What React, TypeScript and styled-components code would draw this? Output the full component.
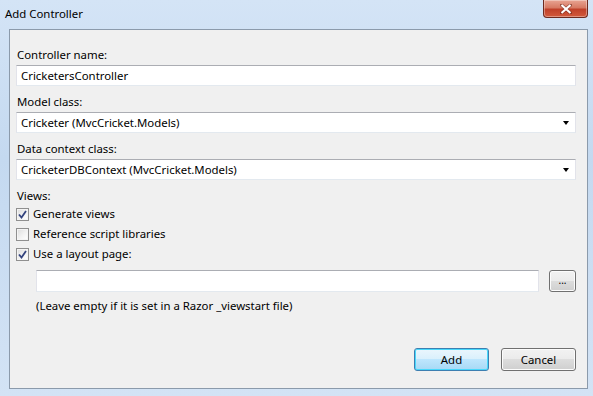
import React from "react";
import styled, { createGlobalStyle } from "styled-components";

const GlobalStyle = createGlobalStyle`
  html, body {
    margin: 0;
    padding: 0;
    width: 593px;
    height: 396px;
    overflow: hidden;
  }
  * {
    box-sizing: border-box;
  }
`;

const Window = styled.div`
  width: 593px;
  height: 396px;
  display: flex;
  flex-direction: column;
  font-family: "Noto Sans", "Open Sans", sans-serif;
  font-size: 11.4px;
  color: #000;
  background: linear-gradient(180deg, #d4e4f6 0%, #c4d9f0 40%, #d3e3f5 100%);
`;

const TitleBar = styled.div`
  height: 29px;
  display: flex;
  align-items: flex-start;
  justify-content: space-between;
  padding: 0 5px;
`;

const Title = styled.div`
  padding-top: 6px;
  line-height: 16px;
  color: #000;
`;

const CloseButton = styled.div`
  width: 45px;
  height: 18px;
  border: 1px solid #6d2a1f;
  border-top: none;
  border-radius: 0 0 4px 4px;
  background: linear-gradient(180deg, #e8a493 0%, #d77a64 45%, #c0412a 55%, #d25a3c 100%);
  box-shadow: inset 0 0 0 1px rgba(255, 255, 255, 0.35);
  display: flex;
  align-items: center;
  justify-content: center;
`;

const Client = styled.div`
  flex: 1;
  margin: 0 5px 7px 9px;
  border: 1px solid #8b9aab;
  background: #f0f0f0;
  display: flex;
  flex-direction: column;
  padding: 17px 11px 17px 6px;
`;

const FieldLabel = styled.div`
  line-height: 16px;
  margin-bottom: 2px;
  padding-left: 1px;
`;

const SectionLabel = styled(FieldLabel)`
  margin-bottom: 0;
`;

const Field = styled.div`
  margin-bottom: 8px;
`;

const TextBox = styled.input`
  display: block;
  width: 100%;
  height: 21px;
  padding: 0 4px;
  margin: 0;
  font-family: "Noto Sans", "Open Sans", sans-serif;
  font-size: 11.4px;
  color: #000;
  background: #fff;
  border: 1px solid #e2e3ea;
  border-top-color: #abadb3;
  border-bottom-color: #e3e9ef;
  border-radius: 0;
  outline: none;
`;

const Combo = styled.div`
  height: 21px;
  display: flex;
  align-items: center;
  justify-content: space-between;
  padding: 0 6px 0 4px;
  background: #fff;
  border: 1px solid #e2e3ea;
  border-top-color: #abadb3;
  border-bottom-color: #e3e9ef;
`;

const Arrow = styled.span`
  width: 0;
  height: 0;
  border-left: 3.5px solid transparent;
  border-right: 3.5px solid transparent;
  border-top: 4px solid #000;
`;

const CheckRow = styled.label`
  height: 20px;
  display: flex;
  align-items: center;
  gap: 4px;
  line-height: 16px;
`;

const CheckBox = styled.span`
  width: 13px;
  height: 13px;
  flex: none;
  border: 1px solid #8f8f8f;
  background: linear-gradient(135deg, #dcdcdc 0%, #f4f4f4 60%, #ffffff 100%);
  box-shadow: inset 0 0 0 1px #f4f4f4;
  display: flex;
  align-items: center;
  justify-content: center;
`;

const LayoutRow = styled.div`
  display: flex;
  align-items: center;
  gap: 10px;
  margin: 6px 0 0 20px;
`;

const LayoutBox = styled(TextBox)`
  flex: 1;
  height: 22px;
`;

const SmallButton = styled.div`
  width: 27px;
  height: 22px;
  border: 1px solid #707070;
  border-radius: 3px;
  background: linear-gradient(180deg, #f2f2f2 0%, #ebebeb 50%, #dddddd 50%, #cfcfcf 100%);
  box-shadow: inset 0 0 0 1px #fcfcfc;
  display: flex;
  align-items: center;
  justify-content: center;
  font-size: 10px;
  line-height: 1;
  padding-bottom: 3px;
`;

const Hint = styled.div`
  line-height: 16px;
  margin: 6px 0 0 20px;
`;

const ButtonRow = styled.div`
  margin-top: auto;
  display: flex;
  justify-content: flex-end;
  gap: 12px;
`;

const DialogButton = styled.div<{ $primary?: boolean }>`
  width: 75px;
  height: 23px;
  border-radius: 3px;
  display: flex;
  align-items: center;
  justify-content: center;
  border: 1px solid ${({ $primary }) => ($primary ? "#3c7fb1" : "#707070")};
  background: ${({ $primary }) =>
    $primary
      ? "linear-gradient(180deg, #eaf6fd 0%, #d9f0fc 50%, #bee6fd 50%, #a7d9f5 100%)"
      : "linear-gradient(180deg, #f2f2f2 0%, #ebebeb 50%, #dddddd 50%, #cfcfcf 100%)"};
  box-shadow: inset 0 0 0 1px ${({ $primary }) => ($primary ? "#48d8fb" : "#fcfcfc")};
`;

const Check = () => (
  <svg width="9" height="9" viewBox="0 0 9 9">
    <path d="M1 4.5 L3.5 7.5 L8 1" fill="none" stroke="#33437e" strokeWidth="1.8" />
  </svg>
);

const CloseGlyph = () => (
  <svg width="12" height="10" viewBox="0 0 12 10">
    <path
      d="M1.5 1 L10.5 9 M10.5 1 L1.5 9"
      stroke="#5a1a10"
      strokeWidth="3.4"
      strokeLinecap="square"
      opacity="0.5"
    />
    <path d="M1.5 1 L10.5 9 M10.5 1 L1.5 9" stroke="#ffffff" strokeWidth="2.2" />
  </svg>
);

const views = [
  { label: "Generate views", checked: true },
  { label: "Reference script libraries", checked: false },
  { label: "Use a layout page:", checked: true },
];

export default function App() {
  return (
    <>
      <GlobalStyle />
      <Window>
        <TitleBar>
          <Title>Add Controller</Title>
          <CloseButton>
            <CloseGlyph />
          </CloseButton>
        </TitleBar>
        <Client>
          <Field>
            <FieldLabel>Controller name:</FieldLabel>
            <TextBox readOnly defaultValue="CricketersController" />
          </Field>
          <Field>
            <FieldLabel>Model class:</FieldLabel>
            <Combo>
              <span>Cricketer (MvcCricket.Models)</span>
              <Arrow />
            </Combo>
          </Field>
          <Field>
            <FieldLabel>Data context class:</FieldLabel>
            <Combo>
              <span>CricketerDBContext (MvcCricket.Models)</span>
              <Arrow />
            </Combo>
          </Field>
          <SectionLabel>Views:</SectionLabel>
          {views.map((v) => (
            <CheckRow key={v.label}>
              <CheckBox>{v.checked && <Check />}</CheckBox>
              <span>{v.label}</span>
            </CheckRow>
          ))}
          <LayoutRow>
            <LayoutBox readOnly defaultValue="" />
            <SmallButton>...</SmallButton>
          </LayoutRow>
          <Hint>(Leave empty if it is set in a Razor _viewstart file)</Hint>
          <ButtonRow>
            <DialogButton $primary>Add</DialogButton>
            <DialogButton>Cancel</DialogButton>
          </ButtonRow>
        </Client>
      </Window>
    </>
  );
}
